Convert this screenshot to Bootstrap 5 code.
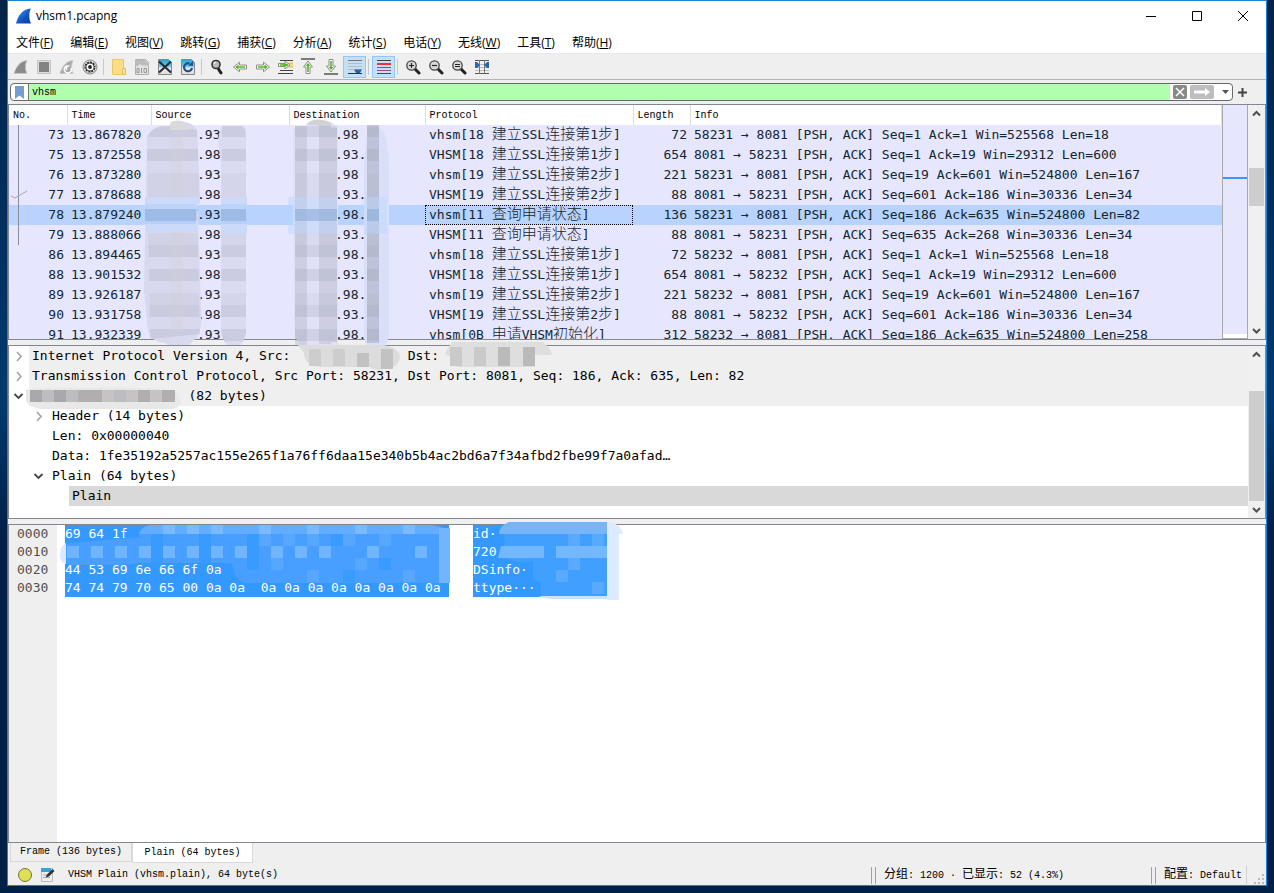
<!DOCTYPE html>
<html lang="zh-CN">
<head>
<meta charset="utf-8">
<meta name="viewport" content="width=device-width, initial-scale=1">
<title>vhsm1.pcapng</title>
<link href="https://cdn.jsdelivr.net/npm/bootstrap@5.3.0/dist/css/bootstrap.min.css" rel="stylesheet">
<style>
:root { --chrome:#efefef; --edge:#82868f; --lav:#e7e6ff; --sel:#3399ff; }
body { background:linear-gradient(#03234a,#003a6e 45%,#02204a 60%,#012045); font-family:"Open Sans","Noto Sans CJK SC",sans-serif; font-size:12px; line-height:20px; color:#000; }
button, input { font-family:inherit; }
.desk { height:100vh; min-height:640px; padding:0 7px 7px; }
.win { border:1px solid #1883d7; background:var(--chrome); }
.titlebar { height:29px; background:#fff; padding-left:8px; }
.cap { width:46px; height:29px; border:0; background:none; padding:0; }
.menus { height:24px; background:#fff; border-bottom:1px solid #e8e8e8; padding-top:2px; }
.menus button { border:0; background:none; padding:0 9px 0 8px; line-height:20px; }
.tools { height:26px; border-bottom:1px solid #b4b4b4; padding-left:1px; }
.tools button { width:23px; height:22px; border:1px solid transparent; background:none; padding:0; line-height:1; }
.tools button.on { background:#c5e0f5; border-color:#90c8f6; }
.tools i { width:1px; height:16px; background:#c8c8c8; margin:0 3px 0 2px; }
.filter { height:24px; padding:0 0 0 2px; }
.fbox { height:18px; border:1px solid #6a6a6a; border-radius:4px; background:#fff; overflow:hidden; }
.fbox input { border:0; border-left:1px solid #777; background:#afffaf; height:16px; padding:2px 3px 0; outline:0; }
.fbox button, .plus { border:0; background:none; padding:0; line-height:1; }
.fbox .apply { margin:0 0 0 3px; }
.fbox .past { padding:0 3px 0 8px; }
.plus { padding:0 19px 0 5px; }
.small-mono, .fbox input, .heads th { font-family:"Liberation Mono","Noto Sans CJK SC",monospace; font-size:10px; }
.small-mono b { font-size:12px; font-weight:400; }
.mono { font-family:"DejaVu Sans Mono","Noto Sans CJK SC",monospace; font-size:13px; }
.txt, .offs, .bytes div, .ascii div { white-space:pre; }
.pane { border:1px solid var(--edge); background:#fff; }
.pane-list { height:236px; }
.pane-tree { height:174px; }
.split { height:5px; flex:none; }
.packets { table-layout:fixed; width:100%; border-collapse:collapse; }
.packets th, .packets td { height:20px; padding:0 3px 0 4px; line-height:20px; overflow:hidden; white-space:pre; }
.heads th { background:#fff; font-weight:400; border-right:1px solid #dedede; }
.packets thead th { padding-top:2px; line-height:18px; }
.packets tbody { background:var(--lav); color:#12272e; }
.packets td.addr { padding-left:46px; }
.packets td.cur { outline:1px dotted #000; outline-offset:-1px; }
.zh { font-size:15px; line-height:18px; font-weight:300; }
.picked { background:#b9d3ff; }
.minimap { width:26px; background:linear-gradient(var(--lav) 72px,var(--sel) 72px,var(--sel) 74px,var(--lav) 74px,var(--lav) 229px,#fff 229px); border:1px solid #a8a8a8; border-width:0 1px 1px; }
.sbar { width:17px; background:#f0f0f0; flex:none; }
.sbar span { margin:0 1px; background:#cdcdcd; }
.sbar svg { flex:none; }
.veil { left:0; top:0; pointer-events:none; overflow:visible; }
.tree { line-height:20px; }
.node { height:20px; }
.node svg { width:20px; height:20px; flex:none; }
.node .txt { background:var(--row,transparent); padding-left:3px; flex:1; min-width:0; }
.proto { --row:#efefef; }
.child { padding-left:20px; }
.deep { padding-left:40px; --row:#d9d9d9; }
.offs { width:48px; padding-left:8px; background:var(--chrome); color:#505050; }
.bytes { margin-left:8px; width:384px; }
.ascii { margin-left:24px; width:134px; }
.offs, .bytes, .ascii { line-height:18px; }
.bytes div, .ascii div { background:var(--sel); color:#fff; height:18px; }
.tabs { height:20px; padding-left:2px; flex:none; }
.tabs button { border:1px solid #d9d9d9; border-top:0; width:122px; padding:0; line-height:18px; background:var(--chrome); }
.tabs button.act { background:#fff; width:121px; line-height:20px; height:20px; }
.status { height:22px; flex:none; padding-top:2px; }
.counts { width:267px; }
.dbl { width:5px; height:17px; border:1px solid #a0a0a0; border-width:0 1px; }
</style>
<script src="https://cdn.jsdelivr.net/npm/bootstrap@5.3.0/dist/js/bootstrap.bundle.min.js"></script>
</head>
<body>
<svg width="0" height="0" class="position-absolute" aria-hidden="true">
  <defs>
    <linearGradient id="fin" x1="0" y1="0" x2="1" y2="1"><stop offset="0" stop-color="#4a9bf0"/><stop offset=".6" stop-color="#0f52c4"/><stop offset="1" stop-color="#0b3fa5"/></linearGradient>
    <linearGradient id="sky" x1="0" y1="0" x2="0" y2="1"><stop offset="0" stop-color="#2aa3dc"/><stop offset=".5" stop-color="#7cc9e8"/><stop offset=".55" stop-color="#eee"/><stop offset="1" stop-color="#ddd"/></linearGradient>
    <symbol id="lens" viewBox="0 0 16 16"><path d="M9.500 9.500L14 14" stroke="#222" stroke-width="3" stroke-linecap="round"/><circle cx="6.500" cy="6.500" r="4.700" fill="#d8d8d8" stroke="#444" stroke-width="1.300"/></symbol>
    <symbol id="right" viewBox="0 0 16 16"><path d="M1.500 6h7V3.200L14.500 8l-6 4.800V10h-7z" fill="#fff" stroke="#8d8d8d"/><path d="M3 7.200h6.500V5.500L12.800 8l-3.300 2.500V8.800H3z" fill="#52b81c"/></symbol>
    <symbol id="up" viewBox="0 0 17 17"><path d="M1 1h14" stroke="#555" stroke-width="1.500"/><path d="M6 15.500V9H3.500L8 3l4.500 6H10v6.500z" fill="#fff" stroke="#8d8d8d"/><path d="M7.200 14V8H5.600L8 5l2.400 3H8.800v6z" fill="#52b81c"/></symbol>
    <symbol id="cup" viewBox="0 0 17 17"><path d="M5 10.500L8.500 7l3.500 3.500" fill="none" stroke="#505050" stroke-width="2"/></symbol>
    <symbol id="cdown" viewBox="0 0 17 17"><path d="M5 7l3.500 3.500L12 7" fill="none" stroke="#505050" stroke-width="2"/></symbol>
    <symbol id="shut" viewBox="0 0 20 20"><path d="M8 6l4 4.500L8 15" fill="none" stroke="#a2a2a2" stroke-width="1.600"/></symbol>
    <symbol id="open" viewBox="0 0 20 20"><path d="M5.500 8l4 4 4-4" fill="none" stroke="#444" stroke-width="1.800"/></symbol>
    <pattern id="bands" width="60" height="240" patternUnits="userSpaceOnUse" y="-3">
      <path d="M0 24h60v12H0zM0 48h60v12H0zM0 108h60v12H0zM0 144h60v12H0zM0 168h60v12H0zM0 204h60v12H0zM0 228h60v12H0z" fill="#848894" opacity=".17"/>
      <path d="M0 72h60v12H0zM0 84h60v12H0zM0 132h60v12H0zM0 192h60v12H0z" fill="#848894" opacity=".08"/>
    </pattern>
  </defs>
</svg>
<div class="desk">
<main class="win h-100 d-flex flex-column overflow-hidden">
  <header class="titlebar d-flex align-items-center flex-shrink-0">
    <svg width="16" height="16" viewBox="0 0 16 16"><path d="M0 15.500C2 8 6 1 15 .500 12.500 5 13 11 15 15.500z" fill="url(#fin)"/></svg>
    <span class="ms-1">vhsm1.pcapng</span>
    <div class="ms-auto d-flex">
      <button class="cap" aria-label="最小化"><svg width="12" height="12" viewBox="0 0 12 12"><path d="M1 6.500h10" stroke="#000"/></svg></button>
      <button class="cap" aria-label="最大化"><svg width="12" height="12" viewBox="0 0 12 12"><path d="M1.500 1.500h9v9h-9z" stroke="#000" fill="none"/></svg></button>
      <button class="cap" aria-label="关闭"><svg width="12" height="12" viewBox="0 0 12 12"><path d="M1 1l10 10M11 1L1 11" stroke="#000"/></svg></button>
    </div>
  </header>
  <nav class="menus d-flex align-items-center flex-shrink-0">
    <button>文件(<u>F</u>)</button><button>编辑(<u>E</u>)</button><button>视图(<u>V</u>)</button><button>跳转(<u>G</u>)</button><button>捕获(<u>C</u>)</button><button>分析(<u>A</u>)</button><button>统计(<u>S</u>)</button><button>电话(<u>Y</u>)</button><button>无线(<u>W</u>)</button><button>工具(<u>T</u>)</button><button>帮助(<u>H</u>)</button>
  </nav>
  <div class="tools d-flex align-items-center flex-shrink-0" role="toolbar">
    <button aria-label="开始捕获"><svg width="16" height="16" viewBox="0 0 16 16"><path d="M1 14.500C3 8 7 2 14 1.500c-2 4-2 9 0 13z" fill="#8b8b8b" stroke="#c9c9c9"/></svg></button>
    <button aria-label="停止捕获"><svg width="16" height="16" viewBox="0 0 16 16"><path d="M1.500 1.500h13v13h-13z" fill="#ddd" stroke="#c4c4c4"/><path d="M3 3h10v10H3z" fill="#838383"/></svg></button>
    <button aria-label="重新开始"><svg width="16" height="16" viewBox="0 0 16 16"><path d="M1 14.500C3 8 7 2 14 1.500c-2 4-2 9 0 13z" fill="#a8a8a8" stroke="#c9c9c9"/><path d="M7 7.500a3.500 3.500 0 1 0 5 1.500M7.500 11V7h3" fill="none" stroke="#fff" stroke-width="1.500"/></svg></button>
    <button aria-label="捕获选项"><svg width="16" height="16" viewBox="0 0 16 16"><circle cx="8" cy="8" r="7" fill="#ddd" stroke="#888"/><circle cx="8" cy="8" r="4.600" fill="#fff" stroke="#2b2b2b" stroke-width="2"/><circle cx="8" cy="8" r="5" fill="none" stroke="#fff" stroke-width="1.200" stroke-dasharray="1 2.140"/><circle cx="8" cy="8" r="1.900" fill="#222"/></svg></button>
    <i></i>
    <button aria-label="打开"><svg width="16" height="16" viewBox="0 0 16 16"><path d="M1.500.500h11v9h2v6h-13z" fill="#fbdd86" stroke="#e9c66c"/><path d="M11.500 9.500h3v6h-3z" fill="#fbe29a" stroke="#e3bd5a"/></svg></button>
    <button aria-label="保存"><svg width="16" height="16" viewBox="0 0 16 16"><path d="M1.500.500h10l3 3v12h-13z" fill="#e2e2e2" stroke="#b0b0b0"/><path d="M1 1h10l4 4v1.500H8L6 5l-2 2H1z" fill="#bbb"/><path d="M3 9.500h2v4H3zM7.500 9v5M10 9.500h2.500v4H10z" fill="none" stroke="#9a9a9a"/></svg></button>
    <button aria-label="关闭文件"><svg width="16" height="16" viewBox="0 0 16 16"><path d="M1.500.500h10l3 3v12h-13z" fill="url(#sky)" stroke="#888"/><path d="M2 2.500l12 11M14 2.500l-12 11" stroke="#2a2d38" stroke-width="2.200"/></svg></button>
    <button aria-label="重新加载"><svg width="16" height="16" viewBox="0 0 16 16"><path d="M1.500.500h10l3 3v12h-13z" fill="url(#sky)" stroke="#888"/><path d="M9.500 4.500A4 4 0 1 0 12 9" fill="none" stroke="#1d4f92" stroke-width="2.200"/><path d="M8 6.800h5V2z" fill="#1d4f92"/></svg></button>
    <i></i>
    <button aria-label="查找"><svg width="16" height="16" viewBox="0 0 16 16"><path d="M8.500 8.500L12 14" stroke="#222" stroke-width="3" stroke-linecap="round"/><circle cx="7" cy="5.500" r="4" fill="#bbb" stroke="#333" stroke-width="1.600"/><path d="M5 5a2 2 0 0 1 2-2" stroke="#fff" fill="none"/></svg></button>
    <button aria-label="上一个"><svg width="16" height="16" viewBox="0 0 16 16"><use href="#right" width="16" height="16" transform="translate(16 0) scale(-1 1)"/></svg></button>
    <button aria-label="下一个"><svg width="16" height="16"><use href="#right"/></svg></button>
    <button aria-label="转到分组"><svg width="17" height="16" viewBox="0 0 17 16"><path d="M3 1.500h13M3 11.500h13M1 14.500h15" stroke="#444"/><path d="M10 4.500h6M10 7.500h6" stroke="#e9c93c" stroke-width="2"/><path d="M1.500 4.500H8V2.200L13 6 8 9.800V7.500H1.500z" fill="#fff" stroke="#8d8d8d"/><path d="M3 6h4V4.500L11 6 7 7.500V6z" fill="#52b81c" stroke="#52b81c"/></svg></button>
    <button aria-label="首个分组"><svg width="17" height="17"><use href="#up"/></svg></button>
    <button aria-label="末个分组"><svg width="17" height="17" viewBox="0 0 17 17"><use href="#up" width="17" height="17" transform="translate(0 17) scale(1 -1)"/></svg></button>
    <button class="on" aria-label="自动滚动"><svg width="16" height="16" viewBox="0 0 16 16"><path d="M1 1.500h14" stroke="#777"/><path d="M1 4.500h14M1 7.500h14M1 10.500h14" stroke="#bbb"/><path d="M1 14.500h14" stroke="#333"/><path d="M7 10.500h8L13 14H9z" fill="#2d5fa8"/></svg></button>
    <i></i>
    <button class="on" aria-label="着色"><svg width="16" height="16" viewBox="0 0 16 16"><path d="M1 1h14v1H1zM1 14h14v1H1z" fill="#444"/><path d="M1 4h14v2H1z" fill="#f03030"/><path d="M1 8h14v1H1z" fill="#3c6dbb"/><path d="M1 11h14v1H1z" fill="#86528f"/></svg></button>
    <i></i>
    <button aria-label="放大"><svg width="16" height="16" viewBox="0 0 16 16"><use href="#lens"/><path d="M4 6.500h5M6.500 4v5" stroke="#222" stroke-width="1.200"/></svg></button>
    <button aria-label="缩小"><svg width="16" height="16" viewBox="0 0 16 16"><use href="#lens"/><path d="M4 6.500h5" stroke="#222" stroke-width="1.200"/></svg></button>
    <button aria-label="正常大小"><svg width="16" height="16" viewBox="0 0 16 16"><use href="#lens"/><path d="M4 5.500h5M4 7.500h5" stroke="#222"/></svg></button>
    <button aria-label="调整列宽"><svg width="16" height="16" viewBox="0 0 16 16"><path d="M1 1.500h14M1 14.500h14" stroke="#555"/><path d="M1 5.500h14M1 8.500h14M1 11.500h14" stroke="#bbb"/><path d="M5.500 1v14M10.500 1v14" stroke="#777"/><path d="M1 3h2l3 3-3 3H1zM15 3h-2l-3 3 3 3h2z" fill="#2d62ad"/></svg></button>
  </div>
  <div class="filter d-flex align-items-center flex-shrink-0">
    <div class="fbox d-flex align-items-center flex-grow-1">
      <button class="px-1" aria-label="书签"><svg width="9" height="13" viewBox="0 0 9 13"><path d="M0 0h9v13L4.500 9.500 0 13z" fill="#729fcf"/></svg></button>
      <input class="flex-grow-1" type="text" value="vhsm" aria-label="显示过滤器">
      <button class="apply" aria-label="清除"><svg class="d-block" width="14" height="14" viewBox="0 0 14 14"><rect width="14" height="14" rx="2" fill="#888a85"/><path d="M3 3l8 8M11 3l-8 8" stroke="#fff" stroke-width="1.500"/></svg></button>
      <button class="apply" aria-label="应用"><svg class="d-block" width="24" height="14" viewBox="0 0 24 14"><rect width="24" height="14" rx="2" fill="#bdbdbd"/><path d="M4 5.500h11V3l5 4-5 4V8.500H4z" fill="#fff"/></svg></button>
      <button class="past" aria-label="历史"><svg class="d-block" width="7" height="4" viewBox="0 0 7 4"><path d="M0 0h7L3.500 4z" fill="#555"/></svg></button>
    </div>
    <button class="plus" aria-label="添加"><svg class="d-block" width="9" height="9" viewBox="0 0 9 9"><path d="M0 4.500h9M4.500 0v9" stroke="#444" stroke-width="2"/></svg></button>
  </div>

  <section class="position-relative flex-shrink-0">
    <div class="pane pane-list d-flex overflow-hidden">
      <div class="flex-grow-1 overflow-hidden">
        <table class="packets">
          <colgroup><col style="width:58px"><col style="width:84px"><col style="width:138px"><col style="width:136px"><col style="width:208px"><col style="width:57px"><col></colgroup>
          <thead class="heads"><tr><th>No.</th><th>Time</th><th>Source</th><th>Destination</th><th>Protocol</th><th>Length</th><th>Info</th></tr></thead>
          <tbody class="mono">
            <tr><td class="text-end">73</td><td>13.867820</td><td class="addr">.93.</td><td class="addr">.98</td><td>vhsm[18 <span class="zh">建立</span>SSL<span class="zh">连接第</span>1<span class="zh">步</span>]</td><td class="text-end">72</td><td>58231 → 8081 [PSH, ACK] Seq=1 Ack=1 Win=525568 Len=18</td></tr>
            <tr><td class="text-end">75</td><td>13.872558</td><td class="addr">.98</td><td class="addr">.93.</td><td>VHSM[18 <span class="zh">建立</span>SSL<span class="zh">连接第</span>1<span class="zh">步</span>]</td><td class="text-end">654</td><td>8081 → 58231 [PSH, ACK] Seq=1 Ack=19 Win=29312 Len=600</td></tr>
            <tr><td class="text-end">76</td><td>13.873280</td><td class="addr">.93</td><td class="addr">.98</td><td>vhsm[19 <span class="zh">建立</span>SSL<span class="zh">连接第</span>2<span class="zh">步</span>]</td><td class="text-end">221</td><td>58231 → 8081 [PSH, ACK] Seq=19 Ack=601 Win=524800 Len=167</td></tr>
            <tr><td class="text-end">77</td><td>13.878688</td><td class="addr">.98.</td><td class="addr">.93.</td><td>VHSM[19 <span class="zh">建立</span>SSL<span class="zh">连接第</span>2<span class="zh">步</span>]</td><td class="text-end">88</td><td>8081 → 58231 [PSH, ACK] Seq=601 Ack=186 Win=30336 Len=34</td></tr>
            <tr class="picked"><td class="text-end">78</td><td>13.879240</td><td class="addr">.93.</td><td class="addr">.98.</td><td class="cur">vhsm[11 <span class="zh">查询申请状态</span>]</td><td class="text-end">136</td><td>58231 → 8081 [PSH, ACK] Seq=186 Ack=635 Win=524800 Len=82</td></tr>
            <tr><td class="text-end">79</td><td>13.888066</td><td class="addr">.98.</td><td class="addr">.93.</td><td>VHSM[11 <span class="zh">查询申请状态</span>]</td><td class="text-end">88</td><td>8081 → 58231 [PSH, ACK] Seq=635 Ack=268 Win=30336 Len=34</td></tr>
            <tr><td class="text-end">86</td><td>13.894465</td><td class="addr">.93.</td><td class="addr">.98.</td><td>vhsm[18 <span class="zh">建立</span>SSL<span class="zh">连接第</span>1<span class="zh">步</span>]</td><td class="text-end">72</td><td>58232 → 8081 [PSH, ACK] Seq=1 Ack=1 Win=525568 Len=18</td></tr>
            <tr><td class="text-end">88</td><td>13.901532</td><td class="addr">.98.</td><td class="addr">.93.</td><td>VHSM[18 <span class="zh">建立</span>SSL<span class="zh">连接第</span>1<span class="zh">步</span>]</td><td class="text-end">654</td><td>8081 → 58232 [PSH, ACK] Seq=1 Ack=19 Win=29312 Len=600</td></tr>
            <tr><td class="text-end">89</td><td>13.926187</td><td class="addr">.93.</td><td class="addr">.98.</td><td>vhsm[19 <span class="zh">建立</span>SSL<span class="zh">连接第</span>2<span class="zh">步</span>]</td><td class="text-end">221</td><td>58232 → 8081 [PSH, ACK] Seq=19 Ack=601 Win=524800 Len=167</td></tr>
            <tr><td class="text-end">90</td><td>13.931758</td><td class="addr">.98.</td><td class="addr">.93.</td><td>VHSM[19 <span class="zh">建立</span>SSL<span class="zh">连接第</span>2<span class="zh">步</span>]</td><td class="text-end">88</td><td>8081 → 58232 [PSH, ACK] Seq=601 Ack=186 Win=30336 Len=34</td></tr>
            <tr><td class="text-end">91</td><td>13.932339</td><td class="addr">.93.</td><td class="addr">.98.</td><td>vhsm[0B <span class="zh">申请</span>VHSM<span class="zh">初始化</span>]</td><td class="text-end">312</td><td>58232 → 8081 [PSH, ACK] Seq=186 Ack=635 Win=524800 Len=258</td></tr>
          </tbody>
        </table>
      </div>
      <div class="minimap flex-shrink-0"></div>
      <div class="sbar d-flex flex-column"><svg width="17" height="17"><use href="#cup"/></svg><span style="height:38px;margin-top:46px"></span><svg class="mt-auto" width="17" height="17"><use href="#cdown"/></svg></div>
    </div>
    <!-- conversation line and redacted addresses -->
    <svg class="veil position-absolute" width="400" height="250" viewBox="0 0 400 250">
      <path d="M10.500 21v120" stroke="#8a8e94"/><path d="M3 92l4 2 12-7" fill="none" stroke="#a8a8a8"/>
      <path d="M139 34q3-10 15-12 8 2 9-4 6-3 14 0 8 1 12 8 2 40 3 72l-4 6 2 6 3 96q2 24-8 31l-8 8q-8 2-20-6-14-1-17-12l-4-40z" fill="#d8d8ee"/>
      <path d="M139 34q3-10 15-12l35 4 3 74-3 8 3 122-50 5z" fill="url(#bands)"/>
      <path d="M163 18q8-3 14 2l4 6h-19z" fill="#dadada"/>
      <path d="M163 28h12v200h-12z" fill="#d0d0d8" opacity=".3"/>
      <path d="M214 22h20q4 2 4 10v197q-4 16-14 15-10-4-11-18V60l-3-25z" fill="#dadaf1"/>
      <path d="M214 22h20q4 2 4 10v197q-4 16-14 15-10-4-11-18z" fill="url(#bands)"/>
      <path d="M137 93h55v7h-55zM213 93h26v7h-26zM138 120h51v8h-51zM213 120h26v10h-26z" fill="#cadaf8"/>
      <path d="M137 100h51v5h-51zM213 100h26v5h-26z" fill="#bed3f8"/><path d="M137 105h51v12h-51zM213 105h25v12h-25z" fill="#9dbbe6"/><path d="M137 117h51v3h-51zM213 117h26v3h-26z" fill="#b7d0f8"/>
      <path d="M285 24h12q8-9 20-8 11 3 13 10v212l4 8h-34q-14-5-14-26l-1-120z" fill="#e0e0f7"/>
      <path d="M360 24q8-3 14 2 6 6 7 36v170l-4 14h-16q-5-5-5-18V54z" fill="#dadff9"/>
      <path d="M287 22h12v220h-12zM311 20h12v220h-12zM323 24h6v214h-6z" fill="#9699a8" opacity=".26"/>
      <path d="M359 21h12v218h-12z" fill="#8c8f9f" opacity=".35"/>
      <path d="M287 22h42v219h-42zM359 22h12v218h-12z" fill="url(#bands)"/>
      <path d="M298 21q6-7 16-5 8 2 10 5z" fill="#d2d2d2"/>
      <path d="M280 93h49v37h-49zM356 93h23v37h-23z" fill="#b4d4ff" opacity=".4"/>
      <path d="M287 105h42v12h-42zM359 105h12v12h-12z" fill="#83a8d8" opacity=".45"/>
    </svg>
  </section>
  <div class="split"></div>
  <section class="position-relative flex-shrink-0">
    <div class="pane pane-tree d-flex">
      <div class="tree mono flex-grow-1 overflow-hidden" role="tree">
        <div class="node proto d-flex"><svg><use href="#shut"/></svg><span class="txt">Internet Protocol Version 4, Src:               Dst:</span></div>
        <div class="node proto d-flex"><svg><use href="#shut"/></svg><span class="txt">Transmission Control Protocol, Src Port: 58231, Dst Port: 8081, Seq: 186, Ack: 635, Len: 82</span></div>
        <div class="node proto d-flex"><svg><use href="#open"/></svg><span class="txt">                    (82 bytes)</span></div>
        <div class="node child d-flex"><svg><use href="#shut"/></svg><span class="txt">Header (14 bytes)</span></div>
        <div class="node child d-flex"><svg></svg><span class="txt">Len: 0x00000040</span></div>
        <div class="node child d-flex"><svg></svg><span class="txt">Data: 1fe35192a5257ac155e265f1a76ff6daa15e340b5b4ac2bd6a7f34afbd2fbe99f7a0afad…</span></div>
        <div class="node child d-flex"><svg><use href="#open"/></svg><span class="txt">Plain (64 bytes)</span></div>
        <div class="node deep d-flex"><svg></svg><span class="txt">Plain</span></div>
      </div>
      <div class="sbar d-flex flex-column"><svg width="17" height="17"><use href="#cup"/></svg><span style="height:110px;margin-top:28px"></span><svg class="mt-auto" width="17" height="17"><use href="#cdown"/></svg></div>
    </div>
    <svg class="veil position-absolute" width="560" height="80" viewBox="0 0 560 80">
      <path d="M290 0h86q16 4 16 12-2 12-16 12-10 2-14-2h-50q-16-2-16-14z" fill="#dcdcdc"/>
      <path d="M301 4h12v17h-12zM325 4h12v17h-12z" fill="#cdcdcd"/><path d="M349 8h12v14h-12zM373 4h12v20h-12z" fill="#c2c2c2"/>
      <path d="M444-3h90q8 4 10 13h-17v12h-77q-8-2-8-10l-5-4z" fill="#dedede"/>
      <path d="M442 2h12v19h-12zM466 2h12v19h-12z" fill="#cacaca"/><path d="M490 2h12v19h-12zM515 2h12v19h-12z" fill="#bababa"/>
      <path d="M18 45q8-3 60-2 84-2 92 6 2 6 3 9-3 6-9 6H36q-16-1-18-9z" fill="#e8e8e8"/>
      <path d="M22 45h12v12H22zM46 45h12v12H46z" fill="#a9a9ab"/><path d="M34 45h12v12H34zM58 45h12v12H58zM106 45h12v12h-12z" fill="#bdbdc0"/><path d="M70 45h24v12H70zM130 45h12v12h-12zM154 45h13v12h-13z" fill="#b0aeae"/><path d="M94 45h12v12H94zM118 45h12v12h-12zM142 45h12v12h-12z" fill="#c5c3c4"/>
    </svg>
  </section>
  <div class="split"></div>
  <section class="pane mono position-relative d-flex flex-grow-1 overflow-visible">
    <div class="offs">0000
0010
0020
0030</div>
    <div class="bytes"><div>69 64 1f</div><div></div><div>44 53 69 6e 66 6f 0a</div><div>74 74 79 70 65 00 0a 0a  0a 0a 0a 0a 0a 0a 0a 0a</div></div>
    <div class="ascii"><div>id·</div><div>720</div><div>DSinfo·</div><div>ttype···</div></div>
    <svg class="veil position-absolute" width="620" height="80" viewBox="0 0 620 80">
      <path d="M142 0h280q16 2 19 11v47H235q-10-4-12-20H130l-16 2H60q-8-3-8-15 3-8 10-7l68-6q0-10 12-12z" fill="#489fff"/>
      <path d="M142 0h280q16 2 19 9H130q2-8 12-9z" fill="#62adff"/>
      <path d="M57 18q-6 4-6 12t6 9z" fill="#d7eaff"/>
      <path d="M58 21h12v12H58zM82 21h12v12H82zM106 21h12v12h-12zM130 21h12v12h-12zM154 21h12v12h-12zM178 21h12v12h-12zM202 21h12v12h-12zM226 21h12v12h-12zM262 21h12v12h-12zM286 21h12v12h-12zM310 21h12v12h-12zM358 21h12v12h-12zM406 21h12v12h-12zM430 3h11v55h-11z" fill="#72b5ff"/>
      <path d="M154 0h12v9h-12zM178 0h12v9h-12zM202 0h12v9h-12zM250 0h12v9h-12zM298 0h12v9h-12zM346 0h12v9h-12zM394 0h12v9h-12z" fill="#7cbaff"/>
      <path d="M250 9h12v12h-12zM274 9h12v12h-12zM298 9h12v12h-12zM334 9h12v12h-12zM370 9h12v12h-12zM262 33h12v12h-12zM298 45h12v12h-12zM346 33h12v12h-12zM394 45h12v12h-12z" fill="#57a7ff"/>
      <path d="M190 9h12v29h-12zM142 9h12v29h-12zM238 9h12v36h-12zM322 9h12v12h-12zM334 45h12v12h-12zM370 33h12v12h-12z" fill="#3a9bff"/>
      <path d="M500-3h98v75h-66v-14l-8-4V37h-14q-12-2-20-7l6-12q-4-16 4-21z" fill="#409fff"/>
      <path d="M500-3h98V9H490q0-8 10-12z" fill="#78b5f6"/><path d="M492 21h43v12h-46zM547 21h51v12h-51z" fill="#73b7ff"/>
      <path d="M559 9h12v12h-12zM583 9h12v12h-12zM559 33h12v12h-12zM547 45h12v12h-12zM583 57h12v12h-12z" fill="#58a9ff"/>
      <path d="M598-3q14 1 16 12h-4v66h-12z" fill="#dcebff"/><path d="M530 71h68v3h-56q-8-1-12-3z" fill="#c8e2ff"/>
    </svg>
  </section>
  <div class="tabs small-mono d-flex align-items-start"><button>Frame (136 bytes)</button><button class="act">Plain (64 bytes)</button></div>
  <footer class="status small-mono d-flex align-items-center ps-2">
    <svg width="16" height="16" viewBox="0 0 16 16"><circle cx="9" cy="8" r="6.500" fill="#dfdf58" stroke="#75752f"/></svg>
    <svg class="ms-2" width="16" height="16" viewBox="0 0 16 16"><path d="M1.500 1.500h11v13h-11z" fill="#eee" stroke="#bbb"/><path d="M1 1h10v4H1z" fill="#35a5d8"/><path d="M3 8h6M3 10.500h7" stroke="#aaa"/><path d="M5.500 10.500L7 7.500 12.500 2l2 2L9 9.500z" fill="#333"/></svg>
    <span class="ms-2 ps-1">VHSM Plain (vhsm.plain), 64 byte(s)</span>
    <div class="ms-auto d-flex align-items-center">
      <span class="dbl"></span><span class="ms-2 counts"><b>分组</b>: 1200 · <b>已显示</b>: 52 (4.3%)</span>
      <span class="dbl"></span><span class="ms-2"><b>配置</b>: Default</span>
      <svg class="ms-1" width="20" height="18" viewBox="0 0 20 18"><path d="M.500 0v18" stroke="#d0d0d0"/><path d="M16 8h2v2h-2zM16 12h2v2h-2zM12 12h2v2h-2zM16 16h2v2h-2zM12 16h2v2h-2zM8 16h2v2H8z" fill="#bbb"/></svg>
    </div>
  </footer>
</main>
</div>
</body>
</html>
